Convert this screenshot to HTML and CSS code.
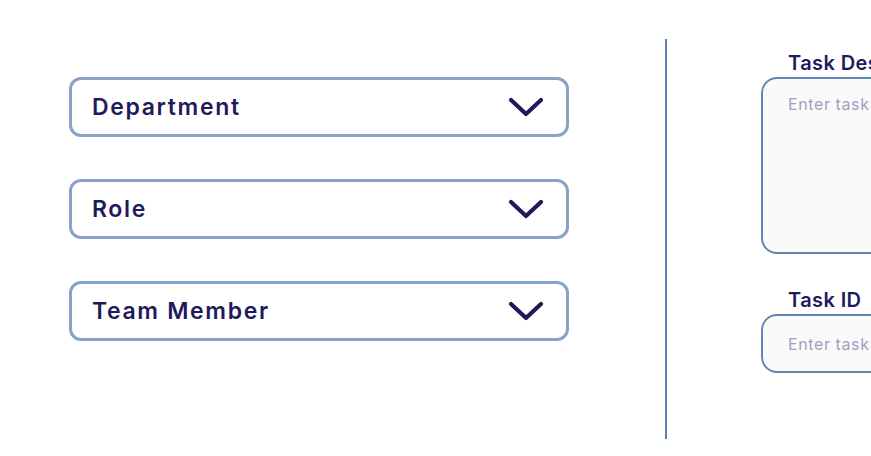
FILE: index.html
```html
<!DOCTYPE html>
<html>
<head>
<meta charset="utf-8">
<link rel="stylesheet" href="styles.css">
</head>
<body>
<div class="page">
  <div class="filters">
    <div class="select">
      <span class="select-label">Department</span>
      <svg class="chev" viewBox="0 0 36 22" width="36" height="22"><path d="M3 3 L18 17 L33 3" fill="none" stroke="#1f1a5c" stroke-width="4.2" stroke-linecap="round" stroke-linejoin="round"/></svg>
    </div>
    <div class="select">
      <span class="select-label">Role</span>
      <svg class="chev" viewBox="0 0 36 22" width="36" height="22"><path d="M3 3 L18 17 L33 3" fill="none" stroke="#1f1a5c" stroke-width="4.2" stroke-linecap="round" stroke-linejoin="round"/></svg>
    </div>
    <div class="select">
      <span class="select-label">Team Member</span>
      <svg class="chev" viewBox="0 0 36 22" width="36" height="22"><path d="M3 3 L18 17 L33 3" fill="none" stroke="#1f1a5c" stroke-width="4.2" stroke-linecap="round" stroke-linejoin="round"/></svg>
    </div>
  </div>
  <div class="divider"></div>
  <div class="form">
    <div class="field">
      <label class="field-label">Task Description</label>
      <div class="textarea"><span class="placeholder">Enter task description</span></div>
    </div>
    <div class="field">
      <label class="field-label">Task ID</label>
      <div class="input"><span class="placeholder">Enter task ID</span></div>
    </div>
  </div>
</div>
</body>
</html>
```
FILE: styles.css
```css
html, body {
  margin: 0;
  padding: 0;
  background: #ffffff;
  overflow: hidden;
}
body {
  width: 871px;
  height: 456px;
  font-family: "Inter", "Open Sans", sans-serif;
}
.page {
  display: flex;
  align-items: flex-start;
  height: 456px;
  overflow: hidden;
}
.filters {
  display: flex;
  flex-direction: column;
  gap: 42px;
  padding-top: 77px;
  margin-left: 69px;
  width: 500px;
  flex: none;
}
.select {
  box-sizing: border-box;
  height: 60px;
  border: 3px solid #88a3c4;
  border-radius: 12px;
  display: flex;
  align-items: center;
  justify-content: space-between;
  padding: 0 22px 0 20px;
}
.select-label {
  font-size: 23px;
  line-height: 28px;
  font-weight: 600;
  color: #1f1a5c;
  letter-spacing: 1.65px;
}
.chev {
  display: block;
  margin-top: 1px;
}
.divider {
  flex: none;
  width: 2px;
  height: 400px;
  margin-top: 39px;
  margin-left: 96px;
  background: #5a82b0;
}
.form {
  flex: none;
  margin-left: 94px;
  width: 300px;
  display: flex;
  flex-direction: column;
  gap: 34px;
  padding-top: 51px;
}
.field {
  display: flex;
  flex-direction: column;
  gap: 2px;
}
.field-label {
  font-size: 20px;
  font-weight: 600;
  color: #1f1a5c;
  padding-left: 27px;
  line-height: 24px;
  letter-spacing: 0.4px;
  white-space: nowrap;
}
.textarea, .input {
  box-sizing: border-box;
  border: 2px solid #5f87b5;
  border-radius: 16px;
  background: #fafafa;
  padding-left: 25px;
}
.textarea {
  height: 177px;
  padding-top: 15px;
}
.input {
  height: 59px;
  display: flex;
  align-items: center;
}
.placeholder {
  font-size: 16px;
  line-height: 20px;
  color: #a09fc3;
  letter-spacing: 0.6px;
  white-space: nowrap;
}
```
